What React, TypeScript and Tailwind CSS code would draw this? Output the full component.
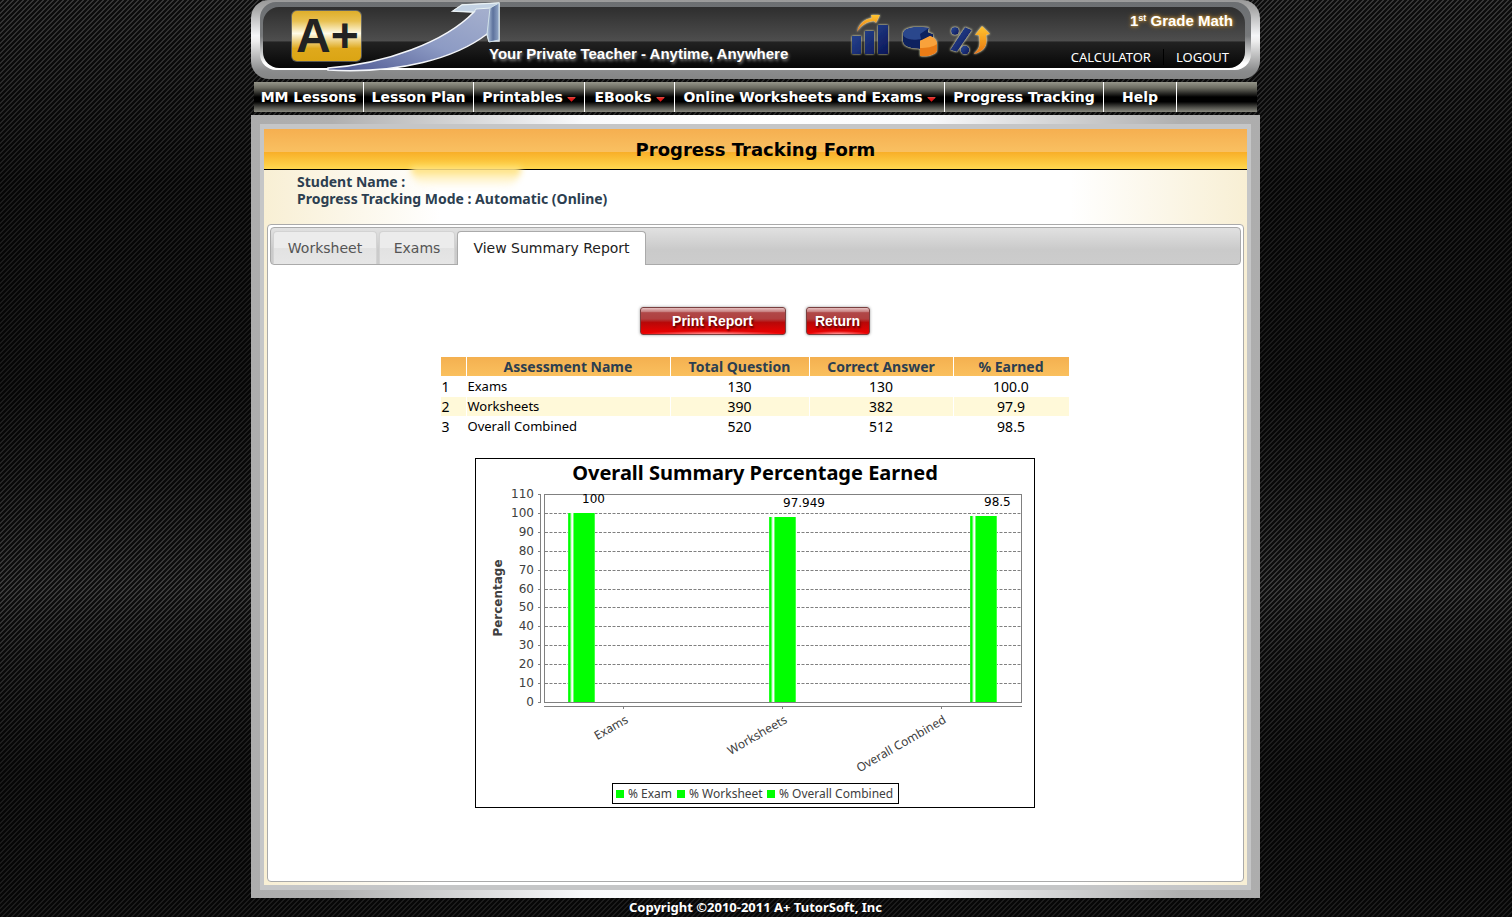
import React from 'react';

interface MenuItem {
  label: string;
  dropdown?: boolean;
  className: string;
}

interface Row {
  name: string;
  total: number;
  correct: number;
  earned: string;
}

const menu: MenuItem[] = [
  { label: 'MM Lessons', className: 'w-[110px]' },
  { label: 'Lesson Plan', className: 'w-[110px]' },
  { label: 'Printables', dropdown: true, className: 'w-[111px]' },
  { label: 'EBooks', dropdown: true, className: 'w-[90px]' },
  { label: 'Online Worksheets and Exams', dropdown: true, className: 'w-[270px]' },
  { label: 'Progress Tracking', className: 'w-[159px]' },
  { label: 'Help', className: 'w-[73px]' },
];

const rows: Row[] = [
  { name: 'Exams', total: 130, correct: 130, earned: '100.0' },
  { name: 'Worksheets', total: 390, correct: 382, earned: '97.9' },
  { name: 'Overall Combined', total: 520, correct: 512, earned: '98.5' },
];

const bars = [
  { x: 93, value: 100, label: '100', tick: 148, name: 'Exams' },
  { x: 294, value: 97.949, label: '97.949', tick: 307, name: 'Worksheets' },
  { x: 495, value: 98.5, label: '98.5', tick: 466, name: 'Overall Combined' },
];

const ticks = [0, 10, 20, 30, 40, 50, 60, 70, 80, 90, 100, 110];

const valueToY = (value: number) => Math.round(244 - (value * 208) / 110);

const Logo: React.FC = () => (
  <svg className="h-[74px] w-[220px] shrink-0" viewBox="287 0 220 74" role="img" aria-label="A+ TutorSoft">
    <defs>
      <linearGradient id="gold" x1="0" y1="0" x2="0" y2="1">
        <stop offset="0" stopColor="#dfae2a" />
        <stop offset="0.2" stopColor="#e8c050" />
        <stop offset="0.45" stopColor="#fffbe8" />
        <stop offset="0.75" stopColor="#dfa91c" />
        <stop offset="1" stopColor="#dba514" />
      </linearGradient>
      <linearGradient id="swoosh" x1="0" y1="1" x2="1" y2="0">
        <stop offset="0" stopColor="#4b5590" />
        <stop offset="0.5" stopColor="#8d9bc4" />
        <stop offset="1" stopColor="#a9b3cf" />
      </linearGradient>
      <linearGradient id="fold" x1="0" y1="0" x2="1" y2="0">
        <stop offset="0" stopColor="#b9cbe2" />
        <stop offset="0.5" stopColor="#5d729c" />
        <stop offset="1" stopColor="#93a8c8" />
      </linearGradient>
    </defs>
    <rect x="291" y="10" width="71" height="52" rx="6" fill="#8a8a80" opacity="0.6" />
    <rect x="292" y="11" width="69" height="50" rx="5" fill="url(#gold)" />
    <text x="296" y="52" fontFamily="Liberation Sans, Arial, sans-serif" fontWeight="700" fontSize="48" fill="#222">
      A+
    </text>
    <path
      d="M328 68 C385 64 445 42 474 12 L453 11 L462 5 L499 3 L499 41 L489 41 L487 34 C456 58 400 74 328 70 Z"
      fill="url(#swoosh)"
      stroke="#f4f6fa"
      strokeWidth="1.5"
    />
    <path d="M453 11 L462 5 L499 3 L491 8 L476 9 L474 12 Z" fill="#c3d2e3" stroke="#e9f3f5" />
    <path d="M499 3 L490 8 L487 34 L489 42 L499 40 Z" fill="url(#fold)" stroke="#cfe0e8" />
  </svg>
);

const BannerIcons: React.FC = () => (
  <svg className="h-12 w-36 shrink-0" viewBox="849 11 144 48" aria-hidden="true">
    <defs>
      <linearGradient id="navy" x1="0" y1="0" x2="1" y2="1">
        <stop offset="0" stopColor="#2c4c98" />
        <stop offset="1" stopColor="#0a1658" />
      </linearGradient>
      <linearGradient id="orange" x1="0" y1="0" x2="0" y2="1">
        <stop offset="0" stopColor="#ffc531" />
        <stop offset="1" stopColor="#e8760f" />
      </linearGradient>
      <filter id="glow" x="-20%" y="-20%" width="140%" height="140%">
        <feDropShadow dx="0" dy="0" stdDeviation="1.2" floodColor="#ffffc8" floodOpacity="1" />
      </filter>
    </defs>
    <g filter="url(#glow)">
      <path d="M853 35h9v18h-9zM866 30h9v23h-9zM879 24h10v29h-10z" fill="url(#navy)" />
      <path d="M858 31 C860 22 866 18 873 17 L872 14 L881 14 L877 22 L875 20 C868 21 863 23 858 31 Z" fill="url(#orange)" />
    </g>
    <g filter="url(#glow)">
      <path d="M904 33 C904 28 911 26 918 26 C924 26 928 26 930 27 L929 31 L934 33 L934 36 L921 40 L921 48 C911 48 904 45 904 41 Z" fill="#10205f" />
      <path d="M904 33 C904 28 911 26 918 26 C924 26 928 26 930 27 L921 33 L922 38 C912 40 904 37 904 33 Z" fill="#2b478c" />
      <path d="M921 40 L931 35 C936 37 938 40 938 44 L938 50 C936 54 929 56 921 55 Z" fill="#ea7c12" />
      <path d="M921 40 L931 35 C936 37 938 40 938 43 C934 46 928 47 921 47 Z" fill="#f9a23a" />
    </g>
    <g filter="url(#glow)">
      <circle cx="956" cy="30" r="4" fill="url(#navy)" />
      <circle cx="966" cy="49" r="4.5" fill="url(#navy)" />
      <path d="M966 26 L973 29 L958 51 L951 49 Z" fill="url(#navy)" />
      <path d="M974 53 C982 48 981 42 980 34 L976 34 L983 25 L991 33 L987 34 C989 44 986 51 974 53 Z" fill="url(#orange)" />
    </g>
  </svg>
);

const Banner: React.FC = () => (
  <header className="rounded-[18px] bg-[linear-gradient(#999_0,#aaa_12%,#f5f6f8_45%,#eee_52%,#8a8b8c_90%,#858686)] px-[9px] pt-0.5 pb-[9px]">
    <div className="rounded-2xl bg-[linear-gradient(#6c6f72_0,#77797b_50%,#fff_90%)] pt-[5px] pr-1.5 pb-0.5 pl-[3px]">
      <div className="flex h-[61px] items-center rounded-2xl bg-[linear-gradient(#2e2e2e_0,#4e4e4e_56%,#222_57%,#060606)] pl-6">
        <div className="-mt-[7px] -mb-[6px] self-start">
          <Logo />
        </div>
        <p className="-ml-[18px] mt-8 whitespace-nowrap text-[15px] leading-5 font-bold text-white [text-shadow:1px_2px_3px_#888] font-['Liberation_Sans',Arial,sans-serif]">
          Your Private Teacher - Anytime, Anywhere
        </p>
        <div className="-mt-1 ml-[60px]">
          <BannerIcons />
        </div>
        <div className="ml-auto flex flex-col items-end gap-4 pr-3 text-white">
          <p className="mt-0.5 text-[15px] leading-5 font-bold [text-shadow:0_0_5px_#c89030,0_0_3px_#c89030] font-['Liberation_Sans',Arial,sans-serif]">
            1<sup className="text-[9px]">st</sup> Grade Math
          </p>
          <div className="flex items-center gap-2 pr-1 text-[13px] leading-5">
            <a href="#calculator">CALCULATOR</a>
            <span className="mx-1 h-4 w-px bg-black" />
            <a href="#logout">LOGOUT</a>
          </div>
        </div>
      </div>
    </div>
  </header>
);

const Menu: React.FC = () => (
  <nav className="mx-[3px] mt-[3px] bg-[linear-gradient(#96968a_0,#6a6a60_20%,#1c1c1a_42%,#000_50%,#000_66%,#55554f_86%,#8a8a80)]">
    <ul className="flex h-[30px] items-stretch">
      {menu.map((item) => (
        <li key={item.label} className={`border-r border-white ${item.className}`}>
          <a
            href="#menu"
            className="flex h-full items-center justify-center gap-1 whitespace-nowrap text-sm font-bold text-white font-['DejaVu_Sans',Verdana,sans-serif]"
          >
            {item.label}
            {item.dropdown && (
              <svg className="mt-1 h-[5px] w-[9px]" viewBox="0 0 10 5" aria-hidden="true">
                <path d="M0 0H10L5 5Z" fill="#e01818" />
                <path d="M1 .5H9" stroke="#e86050" />
              </svg>
            )}
          </a>
        </li>
      ))}
    </ul>
  </nav>
);

const Tabs: React.FC = () => {
  const idle = 'rounded-t border border-b-0 border-[#d3d3d3] bg-[linear-gradient(#ececec_50%,#e2e2e2_50%,#e6e6e6)] text-[#555]';
  return (
    <div
      role="tablist"
      className="flex h-[38px] gap-0.5 rounded border border-[#aaa] bg-[linear-gradient(#e1e1e1,#cacaca_60%,#ccc)] pt-[3px] pl-0.5 text-sm font-['DejaVu_Sans',Verdana,sans-serif]"
    >
      <button role="tab" aria-selected="false" className={`w-[104px] ${idle}`}>
        Worksheet
      </button>
      <button role="tab" aria-selected="false" className={`w-[76px] ${idle}`}>
        Exams
      </button>
      <button
        role="tab"
        aria-selected="true"
        className="-mb-px w-[189px] rounded-t border border-b-0 border-[#aaa] bg-white pb-px text-[#212121]"
      >
        View Summary Report
      </button>
    </div>
  );
};

const RedButton: React.FC<{ className: string; children: React.ReactNode }> = ({ className, children }) => (
  <button
    className={`h-7 rounded-[3px] border border-[#7a4040] bg-[radial-gradient(ellipse_50%_3px_at_50%_100%,#ff9a9a,transparent),linear-gradient(#e6c0c0_0,#c88080_14%,#b04848_18%,#b04040_42%,#b80808_56%,#f00000)] pb-px text-sm font-bold text-white shadow-[0_0_3px_#999] [text-shadow:1px_2px_2px_#500] font-['Liberation_Sans',Arial,sans-serif] ${className}`}
  >
    {children}
  </button>
);

const ResultsTable: React.FC = () => (
  <table className="w-[630px] table-fixed border-separate border-spacing-px text-sm leading-[19px] text-black">
    <thead>
      <tr className="bg-[linear-gradient(#f4b050,#fac05e)] text-[#2c3e50]">
        <th className="w-[25px] p-0" aria-label="Number" />
        <th className="p-0 font-bold">Assessment Name</th>
        <th className="w-[138px] p-0 font-bold">Total Question</th>
        <th className="w-[143px] p-0 font-bold">Correct Answer</th>
        <th className="w-[115px] p-0 font-bold">% Earned</th>
      </tr>
    </thead>
    <tbody>
      {rows.map((row, i) => (
        <tr key={row.name} className="text-center even:[&>td]:bg-[#fff9d9] odd:[&>td]:bg-white">
          <td className="p-0 pl-px text-left">{i + 1}</td>
          <td className="p-0 pl-px text-left text-[13px]">{row.name}</td>
          <td className="p-0">{row.total}</td>
          <td className="p-0">{row.correct}</td>
          <td className="p-0">{row.earned}</td>
        </tr>
      ))}
    </tbody>
  </table>
);

const SummaryChart: React.FC = () => (
  <svg
    className="h-[350px] w-[560px] font-['DejaVu_Sans',sans-serif]"
    viewBox="0 0 560 350"
    role="img"
    aria-label="Overall Summary Percentage Earned"
  >
    <defs>
      <linearGradient id="bar" x1="0" y1="0" x2="1" y2="0">
        <stop offset="0" stopColor="#40ff40" />
        <stop offset="0.04" stopColor="#00ff00" />
        <stop offset="0.07" stopColor="#00ff00" />
        <stop offset="0.12" stopColor="#c8ffc8" />
        <stop offset="0.17" stopColor="#ffffff" />
        <stop offset="0.2" stopColor="#80ff80" />
        <stop offset="0.23" stopColor="#00ff00" />
        <stop offset="0.96" stopColor="#00ff00" />
        <stop offset="1" stopColor="#80ff80" />
      </linearGradient>
    </defs>
    <rect x="0.5" y="0.5" width="559" height="349" fill="#fff" stroke="#000" />
    <text x="280" y="22" textAnchor="middle" fontSize="20" fontWeight="700" fontFamily="Noto Sans, sans-serif">
      Overall Summary Percentage Earned
    </text>
    <text transform="translate(27 140) rotate(-90)" textAnchor="middle" fontSize="12" fontWeight="700" fill="#404040">
      Percentage
    </text>
    <g stroke="#808080" fill="none">
      <rect x="69.5" y="36.5" width="477" height="208" />
      <path d="M65.5 36V245M69 248.5H547" />
      {ticks.map((t) => (
        <path key={t} d={`M63 ${valueToY(t) + 0.5}H66`} />
      ))}
      {bars.map((bar) => (
        <path key={bar.name} d={`M${bar.tick + 0.5} 248V251`} />
      ))}
      {ticks.slice(1).map((t) => (
        <path key={t} d={`M70 ${valueToY(t) + 0.5}H546`} strokeDasharray="3 1.5" />
      ))}
    </g>
    <g fontSize="12" fill="#404040" textAnchor="end">
      {ticks.map((t) => (
        <text key={t} x="59" y={valueToY(t) + 4}>
          {t}
        </text>
      ))}
    </g>
    {bars.map((bar) => (
      <g key={bar.name} fontSize="12">
        <rect x={bar.x} y={valueToY(bar.value)} width="27" height={244 - valueToY(bar.value)} fill="url(#bar)" />
        <text x={bar.x + 14} y={valueToY(bar.value) - 10}>
          {bar.label}
        </text>
        <text
          transform={`translate(${bar.tick + 6} 264) rotate(-30)`}
          textAnchor="end"
          fill="#404040"
          fontFamily="Noto Sans, sans-serif"
        >
          {bar.name}
        </text>
      </g>
    ))}
    <rect x="137.5" y="325.5" width="286" height="20" fill="#fff" stroke="#000" />
    <path d="M141 332h8v8h-8zM202 332h8v8h-8zM292 332h8v8h-8z" fill="#0f0" />
    <g fontSize="12" fill="#404040" fontFamily="Noto Sans, sans-serif">
      <text x="153" y="340">% Exam</text>
      <text x="214" y="340">% Worksheet</text>
      <text x="304" y="340">% Overall Combined</text>
    </g>
  </svg>
);

const App: React.FC = () => {
  return (
    <div className="min-h-screen bg-[linear-gradient(135deg,rgba(0,0,0,.75)_25%,transparent_25%,transparent_50%,rgba(0,0,0,.75)_50%,rgba(0,0,0,.75)_75%,transparent_75%),linear-gradient(#363636_0,#1c1c1c_20%,#1a1a1a_42%,#262626_52%,#3c3c3c_64%,#2a2a2a_72%,#1a1a1a_84%,#1c1c1c)] bg-[size:5px_5px,100%_100%] pr-px font-['Noto_Sans',Tahoma,sans-serif]">
      <div className="mx-auto max-w-[1009px]">
        <Banner />
        <Menu />
        <main className="mt-[3px] bg-[linear-gradient(90deg,#adadad,#b0b0b0_8%,#f8f9fb_33%,#fff_50%,#f8f9fb_67%,#b0b0b0_92%,#adadad)] px-[9px] pt-[9px] pb-2">
          <div className="bg-[#c5c6c7] px-1 py-[5px]">
            <div className="bg-[linear-gradient(90deg,#f8efd4,#fff_18%,#fff_82%,#f8efd4)] pb-[3px]">
              <h1 className="flex h-[41px] items-center justify-center border-b border-black bg-[linear-gradient(#f5af50,#f9c061_57%,#f8ae27_57%,#ffd84f)] pt-0.5 text-lg font-bold text-black font-['DejaVu_Sans',Verdana,sans-serif]">
                Progress Tracking Form
              </h1>
              <div className="relative h-[54px] pt-[3px] pl-[33px] text-sm leading-[17px] font-bold text-[#2c3e50]">
                {/* hides the student's name */}
                <div className="absolute -top-1 left-[147px] h-[22px] w-[110px] rounded-b-[20px] bg-[linear-gradient(#ffd95a,#fff2c4_50%,#fff)] blur-[3px]" />
                <p>Student Name :</p>
                <p>Progress Tracking Mode : Automatic (Online)</p>
              </div>
              <div className="mr-[3px] ml-[3px] rounded border border-[#aaa] bg-white p-0.5">
                <Tabs />
                <div className="flex h-[614px] flex-col items-center pt-[42px] pr-0.5">
                  <div className="flex gap-5">
                    <RedButton className="w-[146px]">Print Report</RedButton>
                    <RedButton className="w-16">Return</RedButton>
                  </div>
                  <div className="mt-[21px] mb-[21px]">
                    <ResultsTable />
                  </div>
                  <SummaryChart />
                </div>
              </div>
            </div>
          </div>
        </main>
        <footer className="text-center text-[13px] leading-[18px] font-bold text-white">
          Copyright ©2010-2011 A+ TutorSoft, Inc
        </footer>
      </div>
    </div>
  );
};

export default App;
